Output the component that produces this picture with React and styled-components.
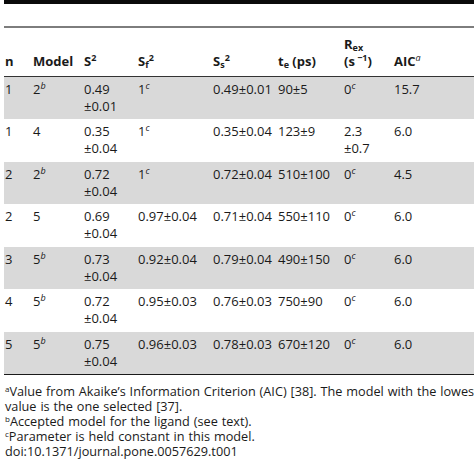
import React from 'react';
import styled, { createGlobalStyle } from 'styled-components';

const rows = [
  { n: '1', model: '2', mSup: 'b', s2: ['0.49', '±0.01'], sf: '1', sfSup: 'c', ss: '0.49±0.01', te: '90±5', rex: ['0'], rexSup: 'c', aic: '15.7', shaded: true },
  { n: '1', model: '4', s2: ['0.35', '±0.04'], sf: '1', sfSup: 'c', ss: '0.35±0.04', te: '123±9', rex: ['2.3', '±0.7'], aic: '6.0' },
  { n: '2', model: '2', mSup: 'b', s2: ['0.72', '±0.04'], sf: '1', sfSup: 'c', ss: '0.72±0.04', te: '510±100', rex: ['0'], rexSup: 'c', aic: '4.5', shaded: true },
  { n: '2', model: '5', s2: ['0.69', '±0.04'], sf: '0.97±0.04', ss: '0.71±0.04', te: '550±110', rex: ['0'], rexSup: 'c', aic: '6.0' },
  { n: '3', model: '5', mSup: 'b', s2: ['0.73', '±0.04'], sf: '0.92±0.04', ss: '0.79±0.04', te: '490±150', rex: ['0'], rexSup: 'c', aic: '6.0', shaded: true },
  { n: '4', model: '5', mSup: 'b', s2: ['0.72', '±0.04'], sf: '0.95±0.03', ss: '0.76±0.03', te: '750±90', rex: ['0'], rexSup: 'c', aic: '6.0' },
  { n: '5', model: '5', mSup: 'b', s2: ['0.75', '±0.04'], sf: '0.96±0.03', ss: '0.78±0.03', te: '670±120', rex: ['0'], rexSup: 'c', aic: '6.0', shaded: true },
];

const widths = [28, 51, 54, 75, 65, 66, 50, 111];

export default function App() {
  return (
    <>
      <GlobalStyle />
      <Page>
        <TopRule />
        <Table>
          <colgroup>
            {widths.map((w, i) => (
              <col key={i} style={{ width: w }} />
            ))}
          </colgroup>
          <thead>
            <HeadRow>
              <Th>n</Th>
              <Th>Model</Th>
              <Th>
                S<Sup>2</Sup>
              </Th>
              <Th>
                S<Sub>f</Sub>
                <Sup>2</Sup>
              </Th>
              <Th>
                S<Sub>s</Sub>
                <Sup>2</Sup>
              </Th>
              <Th>
                t<Sub>e</Sub> (ps)
              </Th>
              <Th>
                R<Sub>ex</Sub>
                <br />
                (s<Sup>&nbsp;−1</Sup>)
              </Th>
              <Th>
                AIC<Sup $italic>a</Sup>
              </Th>
            </HeadRow>
          </thead>
          <tbody>
            {rows.map((r, i) => (
              <Row key={i} $shaded={r.shaded}>
                <Td>{r.n}</Td>
                <Td>
                  {r.model}
                  {r.mSup && <Sup $italic>{r.mSup}</Sup>}
                </Td>
                <Td>
                  {r.s2[0]}
                  <br />
                  {r.s2[1]}
                </Td>
                <Td>
                  {r.sf}
                  {r.sfSup && <Sup $italic>{r.sfSup}</Sup>}
                </Td>
                <Td>{r.ss}</Td>
                <Td>{r.te}</Td>
                <Td>
                  {r.rex[0]}
                  {r.rexSup && <Sup $italic>{r.rexSup}</Sup>}
                  {r.rex[1] && (
                    <>
                      <br />
                      {r.rex[1]}
                    </>
                  )}
                </Td>
                <Td>{r.aic}</Td>
              </Row>
            ))}
          </tbody>
        </Table>
        <Notes>
          <Note>
            <NoteMark>a</NoteMark>Value from Akaike’s Information Criterion (AIC) [38]. The model with the lowest
          </Note>
          <Note>value is the one selected [37].</Note>
          <Note>
            <NoteMark>b</NoteMark>Accepted model for the ligand (see text).
          </Note>
          <Note>
            <NoteMark>c</NoteMark>Parameter is held constant in this model.
          </Note>
          <Note>doi:10.1371/journal.pone.0057629.t001</Note>
        </Notes>
      </Page>
    </>
  );
}

const GlobalStyle = createGlobalStyle`
  html, body {
    margin: 0;
    padding: 0;
    background: #fff;
  }
  body {
    font-family: "Open Sans", "Noto Sans", sans-serif;
    color: #1a1a1a;
    overflow: hidden;
  }
`;

const Page = styled.div`
  width: 474px;
  height: 474px;
  overflow: hidden;
  padding-left: 4px;
  box-sizing: border-box;
`;

const TopRule = styled.div`
  width: 520px;
  height: 4px;
  background: #0a0a0a;
  margin-bottom: 22px;
`;

const Table = styled.table`
  width: 500px;
  table-layout: fixed;
  border-collapse: collapse;
  border-top: 2px solid #7d7d7d;
  border-bottom: 1.5px solid #1a1a1a;
  font-size: 13px;
  line-height: 17px;
`;

const HeadRow = styled.tr`
  height: 49px;
  border-bottom: 1px solid #333;
`;

const Th = styled.th`
  text-align: left;
  vertical-align: bottom;
  font-weight: 700;
  padding: 0 0 6px 1px;
  white-space: nowrap;
`;

const Row = styled.tr`
  background: ${(p) => (p.$shaded ? '#d9d9d9' : '#fff')};
`;

const Td = styled.td`
  vertical-align: top;
  padding: 4px 0 4.5px 1px;
  height: 34px;
  white-space: nowrap;
`;

const Sup = styled.sup`
  font-size: 9px;
  line-height: 0;
  vertical-align: 5px;
  font-style: ${(p) => (p.$italic ? 'italic' : 'normal')};
  font-weight: ${(p) => (p.$italic ? 400 : 'inherit')};
`;

const Sub = styled.sub`
  font-size: 9px;
  line-height: 0;
  vertical-align: -2px;
`;

const Notes = styled.div`
  margin-top: 9px;
  padding-left: 1px;
  font-size: 12.7px;
  line-height: 15px;
  word-spacing: 0.6px;
`;

const Note = styled.div`
  white-space: nowrap;
  height: 15px;
`;

const NoteMark = styled.sup`
  font-size: 8px;
  line-height: 0;
  vertical-align: 4px;
`;
